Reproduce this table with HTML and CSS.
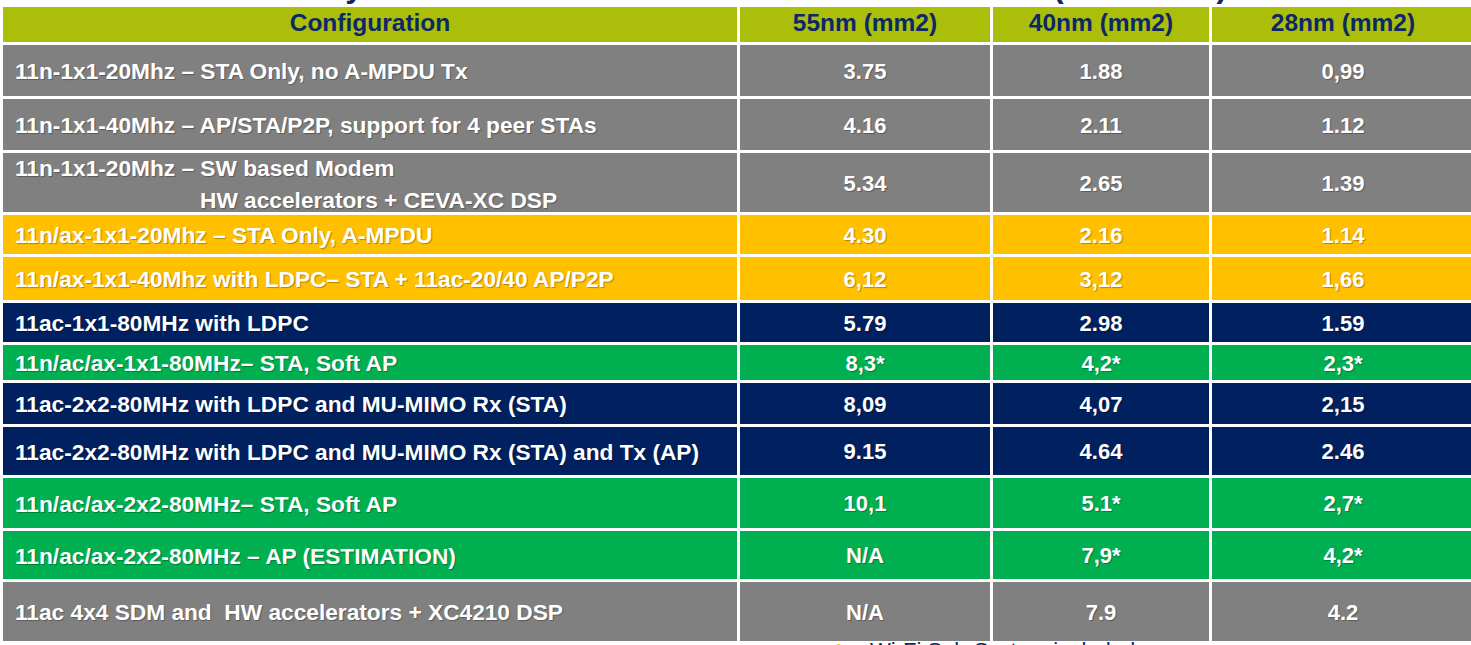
FILE: index.html
```html
<!DOCTYPE html>
<html lang="en">
<head>
<meta charset="utf-8">
<title>Wi-Fi Area Summary</title>
<link rel="stylesheet" href="styles.css">
</head>
<body>
<div class="title">
  <span class="title-a">Wi-Fi Area Summary</span>
  <span class="title-b">(Estimated)</span>
</div>
<div class="table">
  <div class="row head">
    <div class="cell first">Configuration</div>
    <div class="cell">55nm (mm2)</div>
    <div class="cell">40nm (mm2)</div>
    <div class="cell">28nm (mm2)</div>
  </div>
  <div class="row gray">
    <div class="cell first">11n-1x1-20Mhz – STA Only, no A-MPDU Tx</div>
    <div class="cell">3.75</div>
    <div class="cell">1.88</div>
    <div class="cell">0,99</div>
  </div>
  <div class="row gray">
    <div class="cell first">11n-1x1-40Mhz – AP/STA/P2P, support for 4 peer STAs</div>
    <div class="cell">4.16</div>
    <div class="cell">2.11</div>
    <div class="cell">1.12</div>
  </div>
  <div class="row gray">
    <div class="cell first two"><span class="line">11n-1x1-20Mhz – SW based Modem</span><span class="line indent">HW accelerators + CEVA-XC DSP</span></div>
    <div class="cell">5.34</div>
    <div class="cell">2.65</div>
    <div class="cell">1.39</div>
  </div>
  <div class="row yellow">
    <div class="cell first">11n/ax-1x1-20Mhz – STA Only, A-MPDU</div>
    <div class="cell">4.30</div>
    <div class="cell">2.16</div>
    <div class="cell">1.14</div>
  </div>
  <div class="row yellow">
    <div class="cell first">11n/ax-1x1-40Mhz with LDPC– STA + 11ac-20/40 AP/P2P</div>
    <div class="cell">6,12</div>
    <div class="cell">3,12</div>
    <div class="cell">1,66</div>
  </div>
  <div class="row navy">
    <div class="cell first">11ac-1x1-80MHz with LDPC</div>
    <div class="cell">5.79</div>
    <div class="cell">2.98</div>
    <div class="cell">1.59</div>
  </div>
  <div class="row green">
    <div class="cell first">11n/ac/ax-1x1-80MHz– STA, Soft AP</div>
    <div class="cell">8,3*</div>
    <div class="cell">4,2*</div>
    <div class="cell">2,3*</div>
  </div>
  <div class="row navy">
    <div class="cell first">11ac-2x2-80MHz with LDPC and MU-MIMO Rx (STA)</div>
    <div class="cell">8,09</div>
    <div class="cell">4,07</div>
    <div class="cell">2,15</div>
  </div>
  <div class="row navy">
    <div class="cell first">11ac-2x2-80MHz with LDPC and MU-MIMO Rx (STA) and Tx (AP)</div>
    <div class="cell">9.15</div>
    <div class="cell">4.64</div>
    <div class="cell">2.46</div>
  </div>
  <div class="row green">
    <div class="cell first">11n/ac/ax-2x2-80MHz– STA, Soft AP</div>
    <div class="cell">10,1</div>
    <div class="cell">5.1*</div>
    <div class="cell">2,7*</div>
  </div>
  <div class="row green">
    <div class="cell first">11n/ac/ax-2x2-80MHz – AP (ESTIMATION)</div>
    <div class="cell">N/A</div>
    <div class="cell">7,9*</div>
    <div class="cell">4,2*</div>
  </div>
  <div class="row gray">
    <div class="cell first pre">11ac 4x4 SDM and  HW accelerators + XC4210 DSP</div>
    <div class="cell">N/A</div>
    <div class="cell">7.9</div>
    <div class="cell">4.2</div>
  </div>
</div>
<div class="note">
  <span class="bullet"></span>
  <span class="note-text">Wi-Fi Sub-System included</span>
</div>
</body>
</html>
```

FILE: styles.css
```css
html, body {
  margin: 0;
  padding: 0;
  background: #ffffff;
  overflow: hidden;
}

body {
  width: 1471px;
  height: 645px;
  font-family: "Liberation Sans", Arial, sans-serif;
}

.title {
  height: 7px;
  overflow: hidden;
  display: grid;
  grid-template-columns: 363px 690px auto;
  color: #0d2867;
  font-weight: bold;
  font-size: 32px;
  line-height: 34px;
}

.title-a,
.title-b {
  display: block;
  margin-top: -31px;
  white-space: nowrap;
}

.title-a {
  text-align: right;
}

.title-b {
  grid-column: 3;
}

.table {
  display: grid;
  grid-template-columns: 734px 250px 216px 262px;
  grid-template-rows: 35px 51px 51px 59px 39px 43px 39px 35px 41px 48px 50px 48px 59px;
  gap: 3px;
  margin-left: 3px;
}

.row {
  display: contents;
}

.cell {
  display: flex;
  align-items: center;
  justify-content: center;
  padding-top: 2px;
  box-sizing: border-box;
  color: #ffffff;
  font-weight: bold;
  font-size: 22px;
  white-space: nowrap;
  text-shadow: 1px 1px 1px rgba(0, 0, 0, 0.3);
}

.cell.first {
  justify-content: flex-start;
  padding-left: 12px;
  font-size: 22.7px;
}

.cell.pre {
  white-space: pre;
}

.cell.two {
  flex-direction: column;
  align-items: flex-start;
  justify-content: center;
  line-height: 32px;
}

.line {
  display: block;
}

.line.indent {
  padding-left: 185px;
}

.head .cell {
  background: #aabe0a;
  color: #0d2867;
  font-size: 24.5px;
  padding-top: 0;
  padding-bottom: 4px;
  text-shadow: none;
}

.head .cell.first {
  justify-content: center;
  padding-left: 0;
  font-size: 24.5px;
}

.gray .cell {
  background: #808080;
}

.yellow .cell {
  background: #ffc000;
}

.navy .cell {
  background: #002060;
}

.green .cell {
  background: #00b050;
}

.note {
  display: flex;
  align-items: flex-start;
  margin-top: -3px;
  padding-left: 836px;
  height: 30px;
}

.bullet {
  width: 5px;
  height: 5px;
  margin-top: 6px;
  background: #d4d800;
  border-radius: 50%;
}

.note-text {
  margin-left: 29px;
  color: #0d2867;
  font-size: 22px;
  line-height: 25px;
}
```
